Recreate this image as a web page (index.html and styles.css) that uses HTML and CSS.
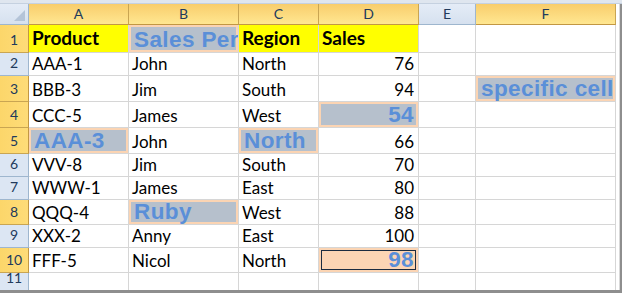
FILE: index.html
```html
<!DOCTYPE html>
<html>
<head>
<meta charset="utf-8">
<link rel="stylesheet" href="styles.css">
</head>
<body>
<div class="sheet">
  <div class="topbar"></div>
  <div class="main">
    <div class="grid">
      <div class="corner"><span class="tri"></span></div>
      <div class="ch sel">A</div>
      <div class="ch sel">B</div>
      <div class="ch sel">C</div>
      <div class="ch sel">D</div>
      <div class="ch">E</div>
      <div class="ch sel">F</div>

      <div class="rh sel">1</div>
      <div class="c hd">Product</div>
      <div class="c hl">Sales Per</div>
      <div class="c hd">Region</div>
      <div class="c hd">Sales</div>
      <div class="c"></div>
      <div class="c"></div>

      <div class="rh">2</div>
      <div class="c">AAA-1</div>
      <div class="c">John</div>
      <div class="c">North</div>
      <div class="c num">76</div>
      <div class="c"></div>
      <div class="c"></div>

      <div class="rh sel">3</div>
      <div class="c">BBB-3</div>
      <div class="c">Jim</div>
      <div class="c">South</div>
      <div class="c num">94</div>
      <div class="c"></div>
      <div class="c hl">specific cell</div>

      <div class="rh sel">4</div>
      <div class="c">CCC-5</div>
      <div class="c">James</div>
      <div class="c">West</div>
      <div class="c hl num">54</div>
      <div class="c"></div>
      <div class="c"></div>

      <div class="rh sel">5</div>
      <div class="c hl">AAA-3</div>
      <div class="c">John</div>
      <div class="c hl">North</div>
      <div class="c num">66</div>
      <div class="c"></div>
      <div class="c"></div>

      <div class="rh">6</div>
      <div class="c">VVV-8</div>
      <div class="c">Jim</div>
      <div class="c">South</div>
      <div class="c num">70</div>
      <div class="c"></div>
      <div class="c"></div>

      <div class="rh">7</div>
      <div class="c">WWW-1</div>
      <div class="c">James</div>
      <div class="c">East</div>
      <div class="c num">80</div>
      <div class="c"></div>
      <div class="c"></div>

      <div class="rh sel">8</div>
      <div class="c">QQQ-4</div>
      <div class="c hl">Ruby</div>
      <div class="c">West</div>
      <div class="c num">88</div>
      <div class="c"></div>
      <div class="c"></div>

      <div class="rh">9</div>
      <div class="c">XXX-2</div>
      <div class="c">Anny</div>
      <div class="c">East</div>
      <div class="c num">100</div>
      <div class="c"></div>
      <div class="c"></div>

      <div class="rh sel">10</div>
      <div class="c">FFF-5</div>
      <div class="c">Nicol</div>
      <div class="c">North</div>
      <div class="c hl act num">98</div>
      <div class="c"></div>
      <div class="c"></div>

      <div class="rh last">11</div>
      <div class="c last"></div>
      <div class="c last"></div>
      <div class="c last"></div>
      <div class="c last"></div>
      <div class="c last"></div>
      <div class="c last"></div>
    </div>
    <div class="edge"></div>
  </div>
  <div class="bottom"></div>
</div>
</body>
</html>
```

FILE: styles.css
```css
* { box-sizing: border-box; }
html, body { margin: 0; padding: 0; background: #ffffff; }

.sheet {
  width: 622px;
  height: 293px;
  display: flex;
  flex-direction: column;
  overflow: hidden;
}

.topbar {
  height: 4px;
  background: #dfe6ef;
  border-bottom: 1px solid #c5d1e0;
}

.main {
  display: flex;
  height: 286px;
}

.grid {
  display: grid;
  grid-template-columns: 29px 100px 110px 80px 100px 57px 140px;
  grid-template-rows: 21px 28px 23px 26px 26px 26px 23px 23px 25px 23px 25px 17px;
  width: 616px;
}

.edge {
  width: 6px;
  background: linear-gradient(to right, #ffffff 0 3px, #d8d8d8 3px 4px, #8e8e8e 4px 6px);
}

.bottom {
  height: 3px;
  background: #8e8e8e;
}

.corner {
  position: relative;
  background: linear-gradient(#e4ecf7, #d6e1ef);
  border-right: 1px solid #9eb6ce;
  border-bottom: 1px solid #9eb6ce;
}
.tri {
  position: absolute;
  right: 3px;
  bottom: 3px;
  width: 0;
  height: 0;
  border-left: 11px solid transparent;
  border-bottom: 11px solid #b4c4d8;
}

.ch {
  font-family: Lato, "Liberation Sans", sans-serif;
  font-size: 14px;
  color: #213a5c;
  display: flex;
  align-items: flex-end;
  justify-content: center;
  padding-bottom: 3px;
  line-height: 1;
  background: linear-gradient(#e4ecf7, #d6e1ef);
  border-right: 1px solid #9eb6ce;
  border-bottom: 1px solid #9eb6ce;
}
.ch.sel {
  background: linear-gradient(#f8cd6c, #ffe791);
  border-right: 1px solid #c9a552;
  border-bottom: 1px solid #c29743;
}

.rh {
  font-family: Lato, "Liberation Sans", sans-serif;
  font-size: 14px;
  color: #213a5c;
  display: flex;
  align-items: flex-end;
  justify-content: center;
  padding-bottom: 5px;
  line-height: 1;
  background: #dce6f3;
  border-right: 1px solid #9eb6ce;
  border-bottom: 1px solid #9eb6ce;
}
.rh.sel {
  background: linear-gradient(to right, #fcd66a, #fedc78);
  border-right: 1px solid #c29743;
  border-bottom: 1px solid #c9a552;
}
.rh.last { border-bottom: none; }

.c {
  font-family: Lato, "Liberation Sans", sans-serif;
  font-size: 17px;
  color: #000000;
  line-height: 1;
  display: flex;
  align-items: flex-end;
  padding: 0 3px 3px 3px;
  white-space: nowrap;
  overflow: hidden;
  border-right: 1px solid #d6d6d6;
  border-bottom: 1px solid #d6d6d6;
}
.c.last { border-bottom: none; }

.c.hd {
  background: #ffff00;
  font-weight: 700;
  font-size: 19px;
  padding-bottom: 5px;
}

.c.num { justify-content: flex-end; padding-right: 4px; }

.c.hl {
  background: #b6c0cc;
  box-shadow: inset 0 0 0 2px #fbd4b3;
  font-family: "Liberation Sans", Arial, sans-serif;
  font-weight: 700;
  font-size: 22.5px;
  letter-spacing: 0.4px;
  color: #5a8fd8;
  padding: 0 4px 1px 5px;
}
.c.hl.num { padding-right: 4px; }

.c.hl.act {
  background: #fcd5b4;
  box-shadow: inset 0 0 0 2px #fbd4b3, inset 0 0 0 3px #1c2c40;
}
```
